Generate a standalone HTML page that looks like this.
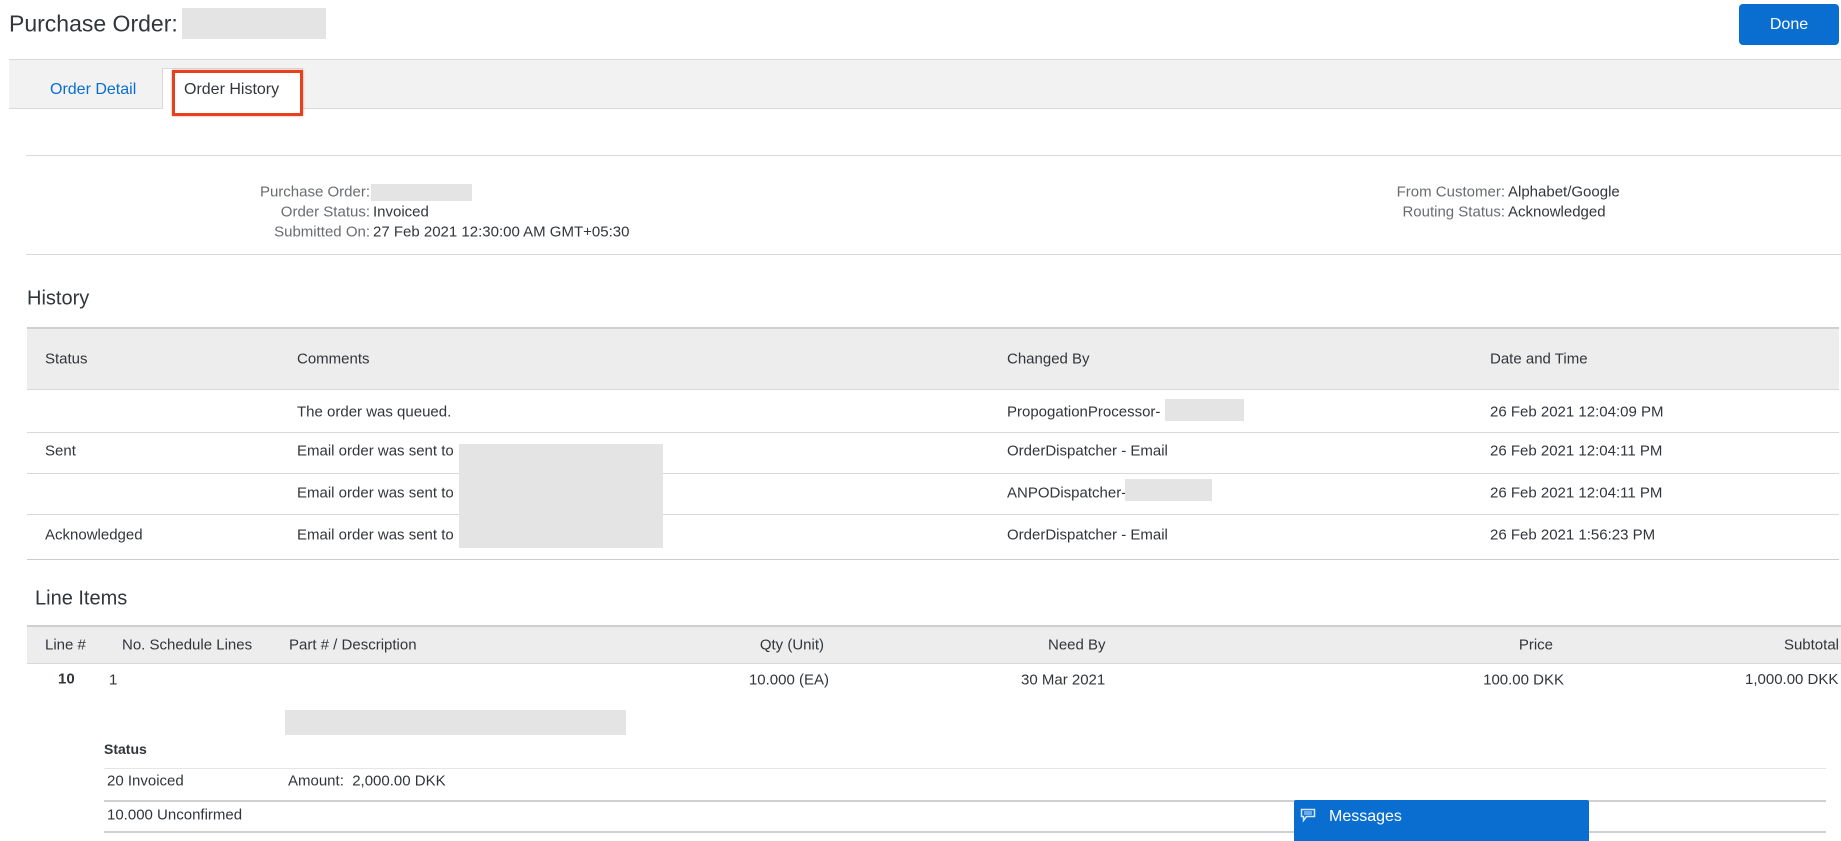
<!DOCTYPE html>
<html><head><meta charset="utf-8"><style>
*{margin:0;padding:0;box-sizing:border-box}
body{width:1841px;height:841px;overflow:hidden;background:#fff;font-family:"Liberation Sans",Arial,sans-serif;color:#32363a;font-size:15px;position:relative}
.a{position:absolute;white-space:nowrap}
.g{position:absolute;background:#e5e4e5}
.l{position:absolute;height:1px;background:#d9d9d9}
.lab{color:#6a6d70}
.c{transform:translateY(-50%)}
.r{transform:translate(-100%,-50%)}
</style></head><body>
<div class="a c" style="left:9px;top:24px;font-size:23px;color:#32363a">Purchase Order:</div>
<div class="g" style="left:182px;top:8px;width:144px;height:31px"></div>
<div class="a" style="left:1739px;top:4px;width:100px;height:41px;background:#0a6ed1;border-radius:4px;color:#fff;font-size:16px;text-align:center;line-height:41px">Done</div>

<div class="a" style="left:9px;top:59px;width:1832px;height:50px;background:#f2f2f2;border-top:1px solid #d9d9d9;border-bottom:1px solid #d9d9d9"></div>
<div class="a" style="left:162px;top:68px;width:141px;height:41px;background:#fff;border:1px solid #d9d9d9;border-bottom:none"></div>
<div class="a c" style="left:50px;top:90px;color:#0a6ed1;font-size:16px">Order Detail</div>
<div class="a c" style="left:184px;top:90px;font-size:16px">Order History</div>
<div class="a" style="left:172px;top:70px;width:131px;height:46px;border:3px solid #e8401c;box-shadow:0 0 2px rgba(200,50,20,.5)"></div>

<div class="l" style="left:26px;top:155px;width:1815px"></div>
<div class="a r lab" style="left:370px;top:192px">Purchase Order:</div>
<div class="g" style="left:371px;top:184px;width:101px;height:17px"></div>
<div class="a r lab" style="left:370px;top:212px">Order Status:</div>
<div class="a c" style="left:373px;top:212px">Invoiced</div>
<div class="a r lab" style="left:370px;top:232px">Submitted On:</div>
<div class="a c" style="left:373px;top:232px">27 Feb 2021 12:30:00 AM GMT+05:30</div>
<div class="a r lab" style="left:1505px;top:192px">From Customer:</div>
<div class="a c" style="left:1508px;top:192px">Alphabet/Google</div>
<div class="a r lab" style="left:1505px;top:212px">Routing Status:</div>
<div class="a c" style="left:1508px;top:212px">Acknowledged</div>
<div class="l" style="left:26px;top:254px;width:1815px"></div>

<div class="a c" style="left:27px;top:299px;font-size:20px">History</div>
<div class="a" style="left:27px;top:327px;width:1812px;height:63px;background:#ededed;border-top:2px solid #cfcfcf;border-bottom:1px solid #d9d9d9"></div>
<div class="a c" style="left:45px;top:359px">Status</div>
<div class="a c" style="left:297px;top:359px">Comments</div>
<div class="a c" style="left:1007px;top:359px">Changed By</div>
<div class="a c" style="left:1490px;top:359px">Date and Time</div>
<div class="l" style="left:27px;top:432px;width:1812px"></div>
<div class="l" style="left:27px;top:473px;width:1812px"></div>
<div class="l" style="left:27px;top:514px;width:1812px"></div>
<div class="l" style="left:27px;top:559px;width:1812px;background:#ccc"></div>
<div class="a c" style="left:297px;top:412px">The order was queued.</div>
<div class="a c" style="left:1007px;top:412px">PropogationProcessor-</div>
<div class="g" style="left:1165px;top:399px;width:79px;height:22px"></div>
<div class="a c" style="left:1490px;top:412px">26 Feb 2021 12:04:09 PM</div>
<div class="a c" style="left:45px;top:451px">Sent</div>
<div class="a c" style="left:297px;top:451px">Email order was sent to</div>
<div class="a c" style="left:1007px;top:451px">OrderDispatcher - Email</div>
<div class="a c" style="left:1490px;top:451px">26 Feb 2021 12:04:11 PM</div>
<div class="a c" style="left:297px;top:493px">Email order was sent to</div>
<div class="a c" style="left:1007px;top:493px">ANPODispatcher-</div>
<div class="g" style="left:1125px;top:479px;width:87px;height:22px"></div>
<div class="a c" style="left:1490px;top:493px">26 Feb 2021 12:04:11 PM</div>
<div class="a c" style="left:45px;top:535px">Acknowledged</div>
<div class="a c" style="left:297px;top:535px">Email order was sent to</div>
<div class="a c" style="left:1007px;top:535px">OrderDispatcher - Email</div>
<div class="a c" style="left:1490px;top:535px">26 Feb 2021 1:56:23 PM</div>
<div class="g" style="left:459px;top:444px;width:204px;height:104px"></div>

<div class="a c" style="left:35px;top:599px;font-size:20px">Line Items</div>
<div class="a" style="left:27px;top:625px;width:1814px;height:39px;background:#ededed;border-top:2px solid #cfcfcf;border-bottom:1px solid #d9d9d9"></div>
<div class="a c" style="left:45px;top:645px">Line #</div>
<div class="a c" style="left:122px;top:645px">No. Schedule Lines</div>
<div class="a c" style="left:289px;top:645px">Part # / Description</div>
<div class="a r" style="left:824px;top:645px">Qty (Unit)</div>
<div class="a c" style="left:1048px;top:645px">Need By</div>
<div class="a r" style="left:1553px;top:645px">Price</div>
<div class="a r" style="left:1839px;top:645px">Subtotal</div>
<div class="a c" style="left:58px;top:679px;font-weight:bold">10</div>
<div class="a c" style="left:109px;top:680px">1</div>
<div class="a r" style="left:829px;top:680px">10.000 (EA)</div>
<div class="a c" style="left:1021px;top:680px">30 Mar 2021</div>
<div class="a r" style="left:1564px;top:680px">100.00 DKK</div>
<div class="a" style="left:1745px;top:670px;width:94px;height:22px;overflow:hidden"><span style="line-height:20px">1,000.00 DKK</span></div>
<div class="g" style="left:285px;top:710px;width:341px;height:25px"></div>
<div class="a c" style="left:104px;top:749px;font-weight:bold;font-size:14px">Status</div>
<div class="l" style="left:104px;top:768px;width:1722px;background:#e5e5e5"></div>
<div class="a c" style="left:107px;top:781px">20 Invoiced</div>
<div class="a c" style="left:288px;top:781px">Amount:&nbsp; 2,000.00 DKK</div>
<div class="l" style="left:104px;top:800px;width:1722px;height:2px;background:#d0d0d0"></div>
<div class="a c" style="left:107px;top:815px">10.000 Unconfirmed</div>
<div class="l" style="left:104px;top:831px;width:1722px;height:2px;background:#d0d0d0"></div>
<div class="a" style="left:1294px;top:800px;width:295px;height:41px;background:#0a6ed1;border-radius:2px 2px 0 0"></div>
<svg class="a" style="left:1300px;top:808px" width="16" height="16" viewBox="0 0 16 16"><path d="M1.5 1.5h13v7h-8l-3 4v-4h-2z" fill="none" stroke="#d6e8fa" stroke-width="1.5"/><path d="M4 4h8M4 6h8" stroke="#d6e8fa" stroke-width="1"/></svg>
<div class="a c" style="left:1329px;top:817px;color:#fff;font-size:16px">Messages</div>
</body></html>
